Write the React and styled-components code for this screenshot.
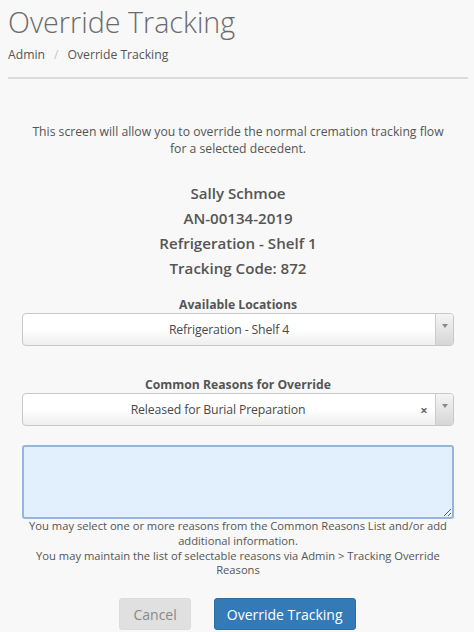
import styled, { createGlobalStyle } from "styled-components";

const Global = createGlobalStyle`
html,body{margin:0;padding:0;background:#f8f8f8;}
body{font-family:"Open Sans",Arial,sans-serif;color:#555;}
*{box-sizing:border-box;}
`;

const Pagina = styled.main`
padding:0 6px 0 8px;height:632px;overflow:hidden;background:#f8f8f8;`;

const Titulo = styled.h1`
margin:0;padding-top:4px;font-size:28.7px;font-weight:300;line-height:36px;color:#6b6b6b;`;

const Trilha = styled.nav`
margin-top:6px;font-size:12.2px;line-height:18px;color:#555;display:flex;gap:9px;
span.sep{color:#c4c4c4;}
`;

const Linha = styled.hr`
margin:13px 0 0;border:0;border-top:2px solid #dcdcdc;`;

const Formulario = styled.section`
padding:0 14px;display:flex;flex-direction:column;align-items:stretch;text-align:center;`;

const Intro = styled.p`
margin:44px 0 0;font-size:12.2px;line-height:17px;color:#555;white-space:nowrap;`;

const Dados = styled.div`
margin-top:24px;font-size:15.1px;font-weight:600;line-height:25px;color:#555;`;

const Rotulo = styled.label`
display:block;font-size:12.2px;font-weight:700;line-height:17px;color:#555;margin-top:${p=>p.$top}px;`;

const Seletor = styled.div`
display:flex;height:33px;border:1px solid #c8c8c8;border-radius:4px;
background:linear-gradient(#ffffff 50%,#eeeeee);overflow:hidden;`;

const Valor = styled.div`
flex:1;display:flex;align-items:center;justify-content:center;font-size:12.3px;letter-spacing:-0.15px;color:#484848;`;

const Limpar = styled.span`
width:22px;display:flex;align-items:center;justify-content:center;font-size:13px;color:#666;font-weight:700;`;

const Seta = styled.div`
width:18px;border-left:1px solid #ccc;display:flex;justify-content:center;padding-top:10px;
background:linear-gradient(#f4f4f4,#d6d6d6);
&::after{content:"";width:0;height:0;border-left:3px solid transparent;border-right:3px solid transparent;border-top:4px solid #888;}
`;

const Notas = styled.textarea`
display:block;margin-top:19px;width:100%;height:74px;resize:vertical;background:#e2f0fd;
border:2px solid #96b4dc;border-radius:3px;outline:none;font-family:inherit;`;

const Ajuda = styled.p`
margin:0;font-size:11.2px;line-height:14.8px;color:#555;white-space:nowrap;`;

const Botoes = styled.div`
display:flex;justify-content:center;gap:23px;margin-top:20px;padding-right:1px;`;

const Botao = styled.button`
height:32px;padding:0 ${p=>p.$primario?12:13}px;border-radius:3px;font-family:inherit;font-size:14px;
border:1px solid ${p=>p.$primario?"#2e6da4":"#dcdcdc"};
background:${p=>p.$primario?"#337ab7":"#e0e0e0"};
color:${p=>p.$primario?"#fff":"#888"};
`;

function Select({valor,limpar}){
 return (
  <Seletor>
   <Valor>{valor}</Valor>
   {limpar && <Limpar>×</Limpar>}
   <Seta/>
  </Seletor>
 );
}

export default function App(){
 return (
  <Pagina>
   <Global/>
   <Titulo>Override Tracking</Titulo>
   <Trilha><span>Admin</span><span className="sep">/</span><span>Override Tracking</span></Trilha>
   <Linha/>
   <Formulario>
    <Intro>This screen will allow you to override the normal cremation tracking flow<br/>for a selected decedent.</Intro>
    <Dados>
     <div>Sally Schmoe</div>
     <div>AN-00134-2019</div>
     <div>Refrigeration - Shelf 1</div>
     <div>Tracking Code: 872</div>
    </Dados>
    <Rotulo $top={15}>Available Locations</Rotulo>
    <Select valor="Refrigeration - Shelf 4"/>
    <Rotulo $top={30}>Common Reasons for Override</Rotulo>
    <Select valor="Released for Burial Preparation" limpar/>
    <Notas autoFocus/>
    <Ajuda>You may select one or more reasons from the Common Reasons List and/or add<br/>additional information.<br/>You may maintain the list of selectable reasons via Admin &gt; Tracking Override<br/>Reasons</Ajuda>
    <Botoes>
     <Botao>Cancel</Botao>
     <Botao $primario>Override Tracking</Botao>
    </Botoes>
   </Formulario>
  </Pagina>
 );
}
